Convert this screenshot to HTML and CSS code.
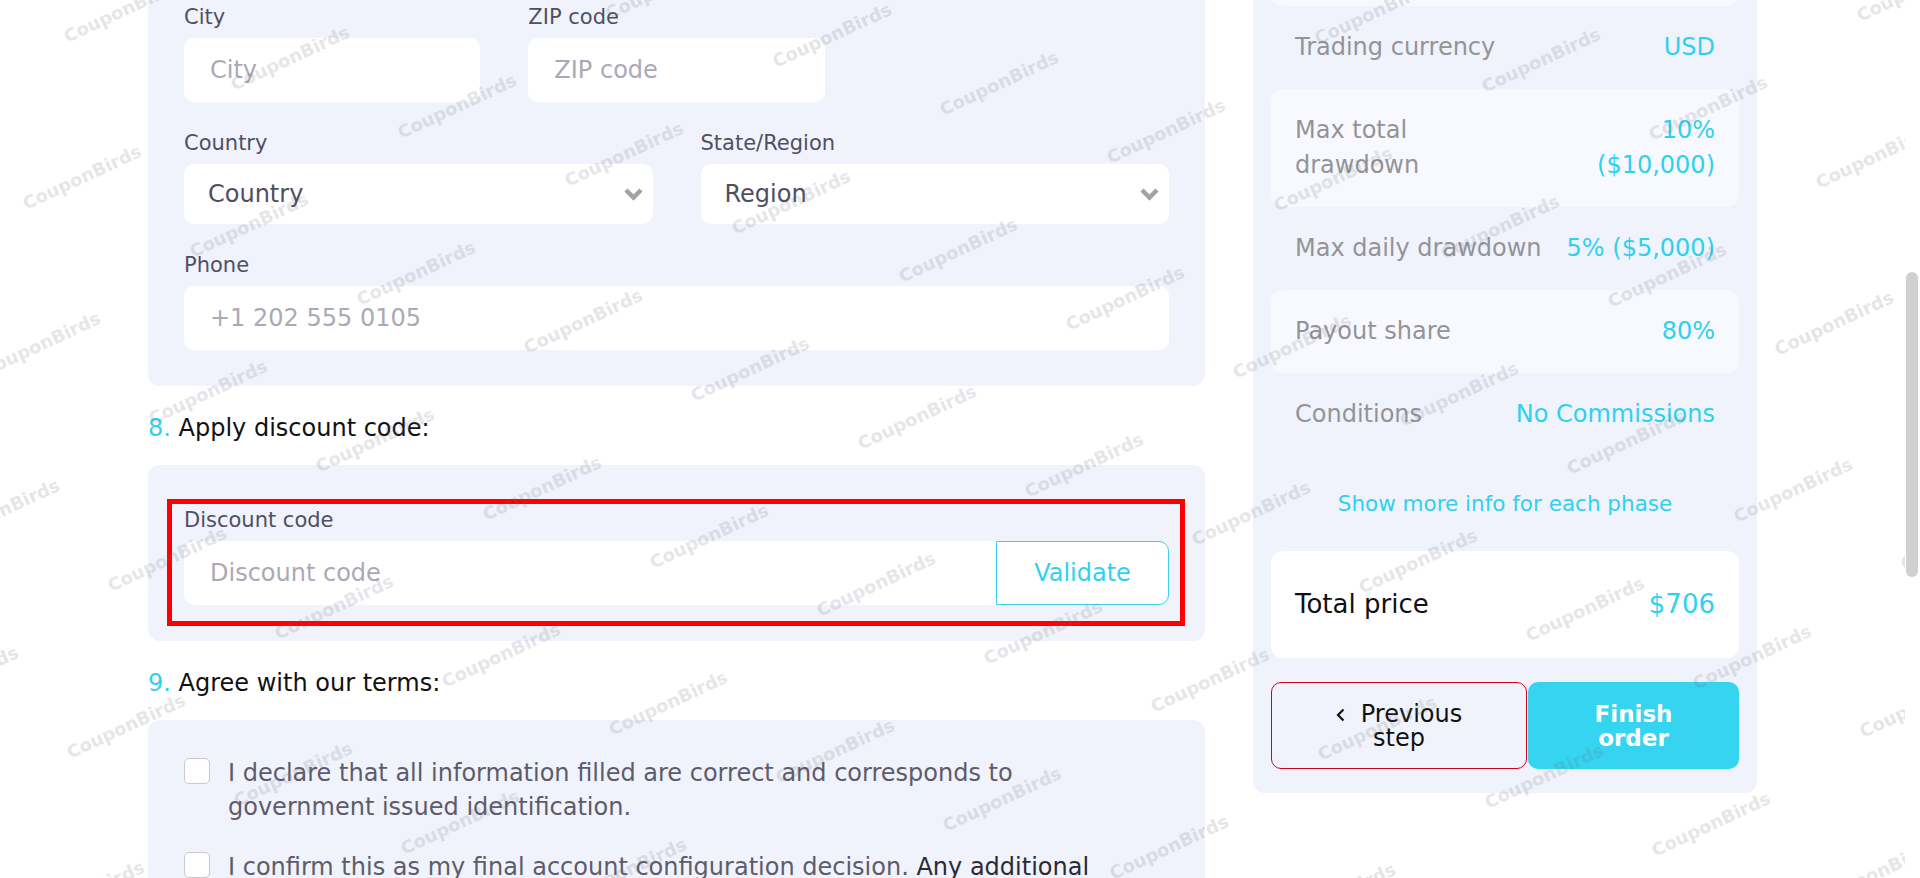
FILE: index.html
```html
<!DOCTYPE html>
<html lang="en">
<head>
    <meta charset="UTF-8">
    <meta name="viewport" content="width=device-width, initial-scale=1.0">
    <title>Checkout - Billing details</title>
    <link rel="stylesheet" href="styles.css">
</head>
<body>
    <div class="page">
        <div class="layout">
            <main class="form-col">
                <section class="panel">
                    <div class="field">
                        <label class="field-label" for="address">Address</label>
                        <input type="text" id="address" placeholder="Street and number">
                    </div>
                    <div class="row row-3">
                        <div class="field">
                            <label class="field-label" for="city">City</label>
                            <input type="text" id="city" placeholder="City">
                        </div>
                        <div class="field">
                            <label class="field-label" for="zip">ZIP code</label>
                            <input type="text" id="zip" placeholder="ZIP code">
                        </div>
                    </div>
                    <div class="row row-2">
                        <div class="field">
                            <label class="field-label" for="country">Country</label>
                            <div class="select-wrap">
                                <select id="country">
                                    <option>Country</option>
                                </select>
                                <svg class="chevron" viewBox="0 0 21 14"><path d="M3 3 L10.5 10.5 L18 3" fill="none" stroke="#a3a3a3" stroke-width="4.5"/></svg>
                            </div>
                        </div>
                        <div class="field">
                            <label class="field-label" for="region">State/Region</label>
                            <div class="select-wrap">
                                <select id="region">
                                    <option>Region</option>
                                </select>
                                <svg class="chevron" viewBox="0 0 21 14"><path d="M3 3 L10.5 10.5 L18 3" fill="none" stroke="#a3a3a3" stroke-width="4.5"/></svg>
                            </div>
                        </div>
                    </div>
                    <div class="field">
                        <label class="field-label" for="phone">Phone</label>
                        <input type="tel" id="phone" placeholder="+1 202 555 0105">
                    </div>
                </section>

                <h3 class="step-title"><span class="step-num">8.</span> Apply discount code:</h3>
                <section class="panel discount">
                    <div class="field">
                        <label class="field-label" for="discount">Discount code</label>
                        <div class="input-group">
                            <input type="text" id="discount" placeholder="Discount code">
                            <button type="button" class="validate">Validate</button>
                        </div>
                    </div>
                    <div class="highlight"></div>
                </section>

                <h3 class="step-title"><span class="step-num">9.</span> Agree with our terms:</h3>
                <section class="panel terms">
                    <label class="check">
                        <input type="checkbox">
                        <span>I declare that all information filled are correct and corresponds to government issued identification.</span>
                    </label>
                    <label class="check">
                        <input type="checkbox">
                        <span>I confirm this as my final account configuration decision. <strong>Any additional changes will require a new account purchase.</strong></span>
                    </label>
                    <label class="check">
                        <input type="checkbox">
                        <span>I have read and agree to the Terms and Conditions.</span>
                    </label>
                </section>
            </main>

            <aside class="summary">
                <h3 class="summary-title">Order summary</h3>
                <div class="sum-row card"><span>Account size</span><span class="sum-value">$100,000</span></div>
                <div class="sum-row"><span>Trading currency</span><span class="sum-value">USD</span></div>
                <div class="sum-row card"><span>Max total<br>drawdown</span><span class="sum-value">10%<br>($10,000)</span></div>
                <div class="sum-row"><span>Max daily drawdown</span><span class="sum-value">5% ($5,000)</span></div>
                <div class="sum-row card"><span>Payout share</span><span class="sum-value">80%</span></div>
                <div class="sum-row"><span>Conditions</span><span class="sum-value">No Commissions</span></div>
                <a class="more-link" href="#">Show more info for each phase</a>
                <div class="total-card"><span>Total price</span><span class="total-value">$706</span></div>
                <div class="actions">
                    <button type="button" class="btn-prev"><svg class="prev-icon" viewBox="0 0 9 14"><path d="M7.5 1.5 L2 7 L7.5 12.5" fill="none" stroke="#111" stroke-width="2.2"/></svg>Previous<br>step</button>
                    <button type="submit" class="btn-finish">Finish<br>order</button>
                </div>
            </aside>
        </div>
    </div>

    <div class="scrollbar"><div class="scrollbar-thumb"></div></div>
    <div class="watermarks" id="watermarks"></div>

    <script>
        // repeating CouponBirds watermark lattice
        const layer = document.getElementById("watermarks");
        for (let n = -3; n <= 8; n++) {
            for (let m = -6; m <= 14; m++) {
                const x = 290 + 167 * m - 41 * n;
                const y = 58 + 48 * m + 167 * n;
                if (x < -120 || x > 2040 || y < -60 || y > 940) continue;
                const mark = document.createElement("span");
                mark.className = "wm";
                mark.textContent = "CouponBirds";
                mark.style.left = x + "px";
                mark.style.top = y + "px";
                layer.appendChild(mark);
            }
        }
    </script>
</body>
</html>
```

FILE: styles.css
```css
* {
    box-sizing: border-box;
}

html {
    overflow: hidden;
}

body {
    margin: 0;
    font-family: "DejaVu Sans", sans-serif;
    background: #fff;
    color: #111;
}

.page {
    width: calc(100% - 15px);
}

.layout {
    width: 1609px;
    margin: -156px auto 0;
    display: grid;
    grid-template-columns: 1057px 504px;
    column-gap: 48px;
    align-items: start;
}

/* left column */

.panel {
    background: #f0f3fb;
    border-radius: 12px;
    padding: 36px;
    display: flex;
    flex-direction: column;
    gap: 30px;
}

.row {
    display: grid;
    column-gap: 48px;
}

.row-3 {
    grid-template-columns: repeat(3, 1fr);
}

.row-2 {
    grid-template-columns: repeat(2, 1fr);
}

.field-label {
    display: block;
    font-size: 21px;
    line-height: 22px;
    margin-bottom: 10px;
    color: #514f62;
}

.field input {
    display: block;
    width: 100%;
    height: 64px;
    border: 0;
    border-radius: 10px;
    background: #fff;
    padding: 0 26px;
    font-family: inherit;
    font-size: 24px;
    color: #333;
    outline: none;
}

.field input::placeholder {
    color: #aba9b5;
}

.select-wrap {
    position: relative;
}

.select-wrap select {
    display: block;
    width: 100%;
    height: 60px;
    -webkit-appearance: none;
    appearance: none;
    border: 0;
    border-radius: 10px;
    background: #fff;
    padding: 0 24px;
    font-family: inherit;
    font-size: 24px;
    color: #4f4e5e;
}

.chevron {
    position: absolute;
    right: 9px;
    top: 50%;
    margin-top: -7px;
    width: 21px;
    height: 14px;
    pointer-events: none;
}

.step-title {
    font-size: 24px;
    font-weight: 400;
    line-height: 30px;
    margin: 27px 0 22px;
    color: #111;
}

.step-num {
    color: #2fd1ef;
}

.discount {
    position: relative;
    padding-top: 44px;
}

.input-group {
    display: flex;
}

.input-group input {
    flex: 1;
    border-radius: 10px 0 0 10px;
}

.validate {
    flex: none;
    width: 173px;
    height: 64px;
    border: 1px solid #3ccfea;
    border-radius: 0 10px 10px 0;
    background: #fff;
    color: #2fd1ef;
    font-family: inherit;
    font-size: 24px;
    cursor: pointer;
}

.highlight {
    position: absolute;
    left: 19px;
    top: 34px;
    width: 1018px;
    height: 127px;
    border: 5px solid #ff0000;
}

.terms {
    gap: 26px;
}

.check {
    display: flex;
    gap: 18px;
    font-size: 24px;
    line-height: 34px;
    color: #5d5b6c;
}

.check span {
    max-width: 915px;
}

.check input {
    -webkit-appearance: none;
    appearance: none;
    flex: none;
    width: 26px;
    height: 26px;
    margin: 2px 0 0;
    border: 1px solid #c9c8d2;
    border-radius: 5px;
    background: #fff;
}

.check strong {
    font-weight: 400;
    color: #2b2a35;
}

/* right column */

.summary {
    background: #f0f3fb;
    border-radius: 12px;
    padding: 18px 18px 24px;
}

.summary-title {
    margin: 0 0 26px;
    padding: 0 24px;
    font-size: 26px;
    font-weight: 400;
    line-height: 35px;
}

.sum-row {
    display: flex;
    justify-content: space-between;
    align-items: center;
    gap: 16px;
    padding: 24px;
    font-size: 24px;
    line-height: 35px;
    color: #939399;
}

.sum-row.card {
    background: #f8f9fe;
    border-radius: 12px;
}

.sum-value {
    color: #2fd1ef;
    text-align: right;
}

.more-link {
    display: block;
    margin: 30px 0;
    text-align: center;
    font-size: 21.5px;
    line-height: 35px;
    color: #2fd1ef;
    text-decoration: none;
}

.total-card {
    display: flex;
    justify-content: space-between;
    align-items: center;
    background: #fff;
    border-radius: 12px;
    padding: 36px 24px;
    font-size: 26px;
    line-height: 35px;
    color: #111;
}

.total-value {
    color: #2fd1ef;
}

.actions {
    display: grid;
    grid-template-columns: 256px 1fr;
    gap: 1px;
    margin-top: 24px;
}

.actions button {
    height: 87px;
    border-radius: 10px;
    font-family: inherit;
    font-size: 24px;
    line-height: 24px;
    cursor: pointer;
}

.btn-prev {
    background: transparent;
    border: 1px solid #d0021b;
    color: #111;
}

.prev-icon {
    width: 9px;
    height: 14px;
    margin-right: 16px;
}

.actions .btn-finish {
    background: #35d4f0;
    border: 0;
    color: #fff;
    font-weight: 700;
    font-size: 23px;
}

/* page chrome */

.scrollbar {
    position: fixed;
    top: 0;
    right: 0;
    width: 15px;
    height: 100%;
    background: #fff;
    padding: 272px 2px 0 1px;
    z-index: 11;
}

.scrollbar-thumb {
    height: 305px;
    border-radius: 6px;
    background: #d0d0d0;
}

.watermarks {
    position: fixed;
    inset: 0;
    overflow: hidden;
    pointer-events: none;
    z-index: 10;
}

.wm {
    position: absolute;
    font-family: "DejaVu Sans", sans-serif;
    font-weight: 700;
    font-size: 18px;
    color: rgba(100, 100, 110, 0.17);
    white-space: nowrap;
    transform: translate(-50%, -50%) rotate(-25deg);
}
```
